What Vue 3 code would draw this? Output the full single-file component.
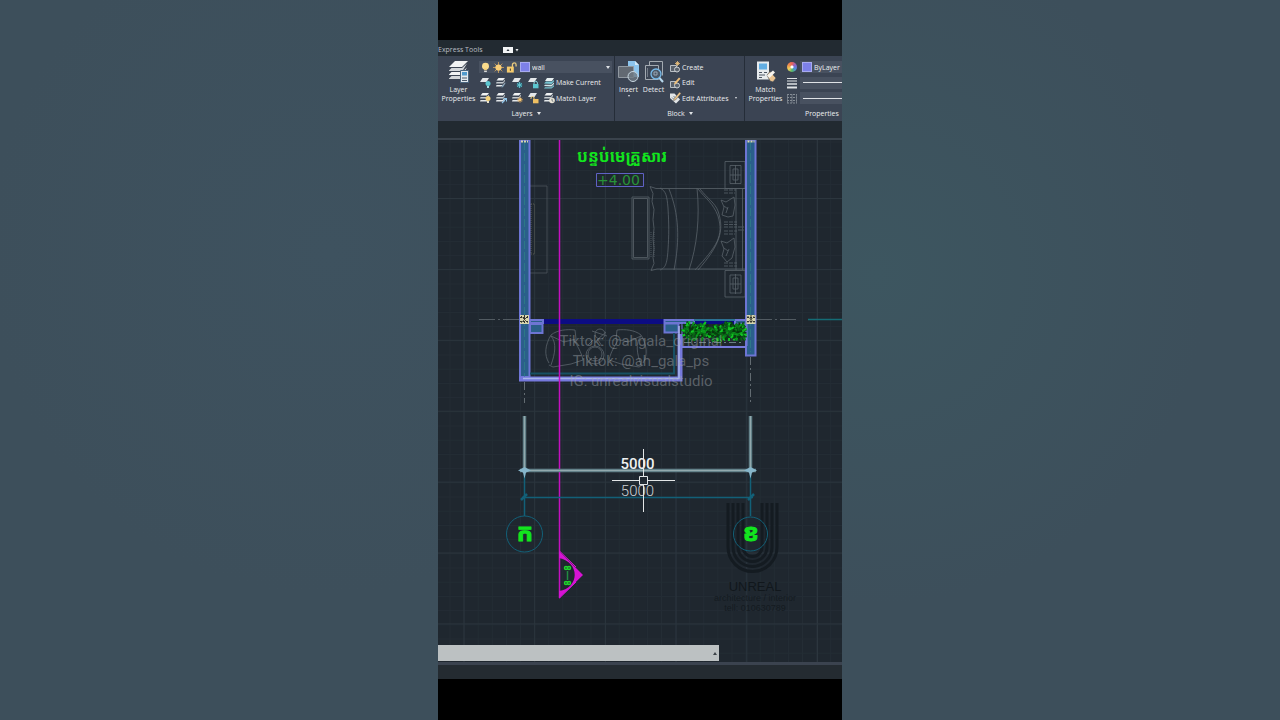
<script setup>
const plants = []
let seed = 7
const rnd = () => {
  seed = (seed * 16807) % 2147483647
  return seed / 2147483647
}
const greens = ['#07400e', '#0a6416', '#0a7a18', '#0c9a1c', '#12c824', '#06380d']
const clusters = [[690, 332], [701, 331], [717, 334], [729, 331], [739, 332]]
for (let i = 0; i < 420; i++) {
  const [cx, cy] = clusters[i % 5]
  const angle = rnd() * Math.PI * 2
  const radius = rnd() * 8
  const x = Math.min(744, Math.max(684, cx + Math.cos(angle) * radius))
  const y = cy + Math.sin(angle) * radius
  plants.push({
    d: `M${x.toFixed(1)} ${y.toFixed(1)}l${(Math.cos(angle) * 3).toFixed(1)} ${(Math.sin(angle) * 3).toFixed(1)}`,
    c: greens[Math.floor(rnd() * greens.length)]
  })
}

const range = (start, step, n) => Array.from({ length: n }, (_, i) => start + i * step)
const minorX = range(450, 14.1, 28)
const majorX = range(464, 70.7, 6)
const minorY = range(142, 14.2, 37)
const majorY = range(198.5, 70.9, 7)

const rowOne = [
  { id: 'off', label: 'Layer off' },
  { id: 'isolate', label: 'Isolate layer' },
  { id: 'freeze', label: 'Freeze layer' },
  { id: 'lock', label: 'Lock layer' }
]
const rowTwo = [
  { id: 'on', label: 'All layers on' },
  { id: 'unisolate', label: 'Unisolate layer' },
  { id: 'thaw', label: 'Thaw layers' },
  { id: 'unlock', label: 'Unlock layer' }
]
</script>

<template>
  <div class="page">
    <svg class="symbols" aria-hidden="true">
      <symbol id="sheet" viewBox="0 0 12 12"><path d="M3.5 1H10L7.5 5H1z" fill="#e4e7ea" /></symbol>
      <symbol id="stack" viewBox="0 0 12 12">
        <path d="M3.5 1H10L8 3.5H1.5z" fill="#f0f2f3" />
        <path d="M1.5 5H8l2-2.4V4L8 6.5H1z" fill="#c3c9ce" />
        <path d="M1.5 8H7.5l2.500-2.5V7L8 9.500H1z" fill="#e4e7ea" />
      </symbol>
      <symbol id="off" viewBox="0 0 12 12">
        <use href="#sheet" /><circle cx="9" cy="6.500" r="2.500" fill="#5cc6d0" /><path d="M8 9h2v2H8z" fill="#a8dfe3" />
      </symbol>
      <symbol id="isolate" viewBox="0 0 12 12">
        <use href="#stack" /><path d="M11.500 5 8 10l-1.500.7.300-1.700z" fill="#8fb9d4" stroke="#3b4453" stroke-width=".4" />
      </symbol>
      <symbol id="freeze" viewBox="0 0 12 12">
        <use href="#sheet" /><circle cx="8.500" cy="8" r="2.800" fill="#2c7584" />
        <path d="M8.500 5v6M6 6.500l5 3M11 6.500l-5 3" stroke="#6cc4d0" stroke-width=".9" />
      </symbol>
      <symbol id="lock" viewBox="0 0 12 12">
        <use href="#sheet" /><path d="M7 7.500V6a1.700 1.700 0 0 1 3.400 0v1.500" fill="none" stroke="#8bd2da" /><path d="M6 7h5.500v4.300H6z" fill="#5cc6d0" />
      </symbol>
      <symbol id="on" viewBox="0 0 12 12">
        <use href="#stack" /><circle cx="9" cy="6.500" r="2.500" fill="#f4d27a" /><path d="M8 9h2v2H8z" fill="#e9e2cc" />
      </symbol>
      <symbol id="unisolate" viewBox="0 0 12 12">
        <use href="#stack" /><path d="m7 11 4-4M8.500 6.500h3v3" fill="none" stroke="#8fc4e8" stroke-width="1.100" />
      </symbol>
      <symbol id="thaw" viewBox="0 0 12 12">
        <use href="#stack" /><path d="M9 4.800v6M6 7.800h6M7 5.800l4 4M11 5.800l-4 4" stroke="#e0a95c" stroke-width=".8" /><circle cx="9" cy="7.800" r="1.500" fill="#f7c873" />
      </symbol>
      <symbol id="unlock" viewBox="0 0 12 12">
        <use href="#sheet" /><path d="M7 7.500V6a1.500 1.500 0 0 0-3 0v1" fill="none" stroke="#e9c878" /><path d="M6 7h5.500v4.300H6z" fill="#eebf62" />
      </symbol>
      <symbol id="current" viewBox="0 0 12 12">
        <path d="M4 1h7L9 4H2z" fill="#e8f0f2" /><path d="M1 6.500 3 4.500h6l2-1.500v1.500L8.500 7z" fill="#77c2d0" />
        <path d="M1 9l1-1.200h6.500L11 5.500V7L8.500 9.500z" fill="#cfe6ea" /><path d="M1 11.500l1-1.200h6.500L11 8v1.500l-2.500 2z" fill="#77c2d0" />
      </symbol>
      <symbol id="match" viewBox="0 0 12 12">
        <use href="#stack" /><circle cx="9" cy="8.500" r="2.800" fill="#e9e5d8" /><path d="M9 6.800v1.900l1.300.8" fill="none" stroke="#525a66" stroke-width=".8" />
      </symbol>
      <symbol id="bulb" viewBox="0 0 12 12">
        <circle cx="6" cy="4.500" r="3.800" fill="#fbdc8c" /><path d="M4.500 7h3v2h-3z" fill="#f4cf78" /><path d="M4.500 9.500h3V11h-3z" fill="#d7d9da" />
      </symbol>
      <symbol id="sun" viewBox="0 0 12 12">
        <path d="M6 0v12M0 6h12M1.800 1.800l8.400 8.400M10.200 1.800l-8.400 8.400" stroke="#c39a5c" /><circle cx="6" cy="6" r="3.400" fill="#fbcf78" />
      </symbol>
      <symbol id="padlock" viewBox="0 0 12 12">
        <path d="M7 6V3a2 2 0 0 1 4 0v2" fill="none" stroke="#e8c97e" stroke-width="1.400" /><path d="M1 5h7.500v6.500H1z" fill="#f5cb6d" /><path d="M4.200 7h1.200v2.500H4.200z" fill="#4c4a40" />
      </symbol>
      <symbol id="create" viewBox="0 0 12 12">
        <path d="M1.500 4.500h6v6h-6z" fill="#59616c" stroke="#b9bfc5" /><circle cx="8" cy="8.500" r="2.500" fill="#59616c" stroke="#d0d4d7" />
        <path d="M8.500 0v5M6 2.500h5M6.800.8l3.400 3.400M10.200.8 6.800 4.200" stroke="#f2c57c" stroke-width=".8" />
      </symbol>
      <symbol id="edit" viewBox="0 0 12 12">
        <path d="M1.500 4.500h6v6h-6z" fill="#59616c" stroke="#b9bfc5" /><circle cx="8" cy="8.500" r="2.500" fill="#59616c" stroke="#d0d4d7" />
        <path d="M10 .5l1.500 1.300-4.500 5-2 .7.600-2z" fill="#edbd77" />
      </symbol>
      <symbol id="attributes" viewBox="0 0 12 12">
        <path d="M1 1.500h4.500L11 7.500l-4 4-6-5.500z" fill="#e3e6e8" /><path d="M3 5.500l2 2M4.500 4l2.500 2.500" stroke="#616975" stroke-width=".8" />
        <path d="M10.500 0 12 1.500 6.500 8l-2 .7.600-2z" fill="#efc486" stroke="#3b4453" stroke-width=".4" />
      </symbol>
    </svg>

    <div class="side left"></div>
    <main class="phone">
      <div class="app">
        <nav class="tabs">
          <a href="#express">Express Tools</a>
          <button class="featured" aria-label="Featured apps">
            <svg viewBox="0 0 16 6" width="16" height="6"><path d="M0 0h10v6H0z" fill="#f3f5f6" /><path d="M3.500 4 5 2l1.500 2z" fill="#28303a" /><path d="M12.500 2h3L14 4.500z" fill="#e6e8ea" /></svg>
          </button>
        </nav>

        <div class="ribbon">
          <section class="panel layers">
            <div class="body">
              <button class="big wide">
                <svg viewBox="0 0 24 24" width="24" height="24">
                  <path d="M8 1h13l-6 6H2z" fill="#f1f3f4" /><path d="M2 10.500 4.500 8H15l5-4.500L15.500 11H2z" fill="#d3d7db" />
                  <path d="M2 14.500 4.500 12H15l5-4.500L15.500 15H2z" fill="#f1f3f4" /><path d="M2 18.500 4.500 16H14l2-1v4H2z" fill="#d3d7db" />
                  <path d="M13.500 10.500h8v12h-8z" fill="#e2e9ee" stroke="#49657f" /><path d="M15 12h5v3.500h-5z" fill="#4f9acd" /><path d="M15 18h5M15 20.500h5" stroke="#4b5a6a" />
                </svg>
                <span>Layer<br>Properties</span>
              </button>
              <div class="tools">
                <div class="combo">
                  <svg width="11" height="11"><use href="#bulb" /></svg>
                  <svg width="11" height="11"><use href="#sun" /></svg>
                  <svg width="11" height="11"><use href="#padlock" /></svg>
                  <i class="swatch"></i>
                  <select aria-label="Layer"><option>wall</option></select>
                  <i class="caret"></i>
                </div>
                <div class="toolrow">
                  <button v-for="t in rowOne" :key="t.id" class="tool" :aria-label="t.label"><svg width="12" height="12"><use :href="'#' + t.id" /></svg></button>
                  <button class="text"><svg width="12" height="12"><use href="#current" /></svg>Make Current</button>
                </div>
                <div class="toolrow">
                  <button v-for="t in rowTwo" :key="t.id" class="tool" :aria-label="t.label"><svg width="12" height="12"><use :href="'#' + t.id" /></svg></button>
                  <button class="text"><svg width="12" height="12"><use href="#match" /></svg>Match Layer</button>
                </div>
              </div>
            </div>
            <button class="title">Layers <i class="caret"></i></button>
          </section>

          <section class="panel block">
            <div class="body">
              <button class="big">
                <svg viewBox="0 0 24 24" width="24" height="24">
                  <path d="M11 1h7l4 4v12H11z" fill="#8cc5ee" /><path d="M18 1v4h4" fill="#d3e9f8" /><path d="M1.500 6.500h15v11h-15z" fill="#626972" stroke="#9199a1" />
                  <circle cx="16" cy="16.500" r="5" fill="#707a84" fill-opacity=".8" stroke="#c8d7e1" />
                </svg>
                <span>Insert</span><i class="caret small"></i>
              </button>
              <button class="big">
                <svg viewBox="0 0 24 24" width="24" height="24">
                  <path d="M7.500 5V1.500h13v14M3.500 5.500h13v14h-13z" fill="none" stroke="#a3aab1" /><path d="M5.500 8v9" stroke="#737b86" />
                  <circle cx="14" cy="14" r="5" fill="#4a5868" stroke="#79bceb" stroke-width="1.300" /><path d="m17.500 18 3.500 4" stroke="#b8d9ee" stroke-width="2" /><path d="M12 12h3v3h-3z" fill="none" stroke="#9aa7b3" />
                </svg>
                <span>Detect</span>
              </button>
              <div class="list">
                <button class="text"><svg width="12" height="12"><use href="#create" /></svg>Create</button>
                <button class="text"><svg width="12" height="12"><use href="#edit" /></svg>Edit</button>
                <button class="text"><svg width="12" height="12"><use href="#attributes" /></svg>Edit Attributes<i class="caret small"></i></button>
              </div>
            </div>
            <button class="title">Block <i class="caret"></i></button>
          </section>

          <section class="panel properties">
            <div class="body">
              <button class="big wide">
                <svg viewBox="0 0 24 24" width="24" height="24">
                  <path d="M3 1.500h12v18H3z" fill="#e7ebee" /><path d="M5 3.500h8v6H5z" fill="#62aee3" /><path d="M5 12.500h3M5 15h6M5 17.500h3M10 12.500h3" stroke="#4b5462" />
                  <path d="m13 15 3-3.500 6 6.500-3 4-3-1z" fill="#e9c391" stroke="#3b4453" stroke-width=".6" /><path d="m13 15.500 6-5 2 2-5.500 5.500z" fill="#f6f3ed" />
                </svg>
                <span>Match<br>Properties</span>
              </button>
              <div class="list props">
                <div class="prop"><i class="wheel"></i><div class="combo"><i class="swatch"></i><select aria-label="Object color"><option>ByLayer</option></select></div></div>
                <div class="prop">
                  <svg viewBox="0 0 12 12" width="12" height="12"><path d="M1 1.500h10M1 4h10" stroke="#dfe2e5" /><path d="M1 7h10" stroke="#dfe2e5" stroke-width="1.500" /><path d="M1 10.500h10" stroke="#dfe2e5" stroke-width="2" /></svg>
                  <button class="linebox" aria-label="Lineweight"><i></i></button>
                </div>
                <div class="prop">
                  <svg viewBox="0 0 12 12" width="12" height="12"><path d="M1 2.500h10M1 5.500h10M1 8.500h10M1 11h10" stroke="#8f969e" stroke-dasharray="2 1" stroke-width=".9" /><path d="M1.500 2v9M6 2v9M10.500 2v9" stroke="#7f8791" stroke-width=".8" /></svg>
                  <button class="linebox" aria-label="Linetype"><i></i></button>
                </div>
              </div>
            </div>
            <button class="title">Properties <i class="caret"></i></button>
          </section>
        </div>

        <div class="strip"></div>

        <div class="workspace">
          <svg class="drawing" viewBox="438 140 404 522" preserveAspectRatio="xMidYMid slice" role="img" aria-label="Floor plan">
            <g stroke="#242d35" stroke-width="1">
              <path v-for="x in minorX" :key="'a' + x" :d="`M${x} 140V662`" />
              <path v-for="y in minorY" :key="'b' + y" :d="`M438 ${y}H842`" />
            </g>
            <g stroke="#2c363e" stroke-width="1">
              <path v-for="x in majorX" :key="'c' + x" :d="`M${x} 140V662`" />
              <path v-for="y in majorY" :key="'d' + y" :d="`M438 ${y}H842`" />
            </g>

            <path d="M728 503v44a24.500 24.500 0 0 0 49 0v-44M733 503v44a19.500 19.500 0 0 0 39 0v-44M738 503v44a14.500 14.500 0 0 0 29 0v-44M743 503v44a9.500 9.500 0 0 0 19 0v-44" fill="none" stroke="#141b21" stroke-width="3" />
            <g class="brand" text-anchor="middle">
              <text x="755" y="591" class="unreal">UNREAL</text>
              <text x="755" y="601" class="tag">architecture / interior</text>
              <text x="755" y="611" class="tag">tell: 010630789</text>
            </g>

            <g fill="none" stroke="#59626a" stroke-width=".8">
              <path d="M530 186h17v87h-17" stroke="#4c545c" />
              <path d="M531 204h3.500v50H531z" stroke-dasharray="1 1" stroke="#66645a" />
              <path d="M632 197h17v62h-17zM633.500 198.500h14v59h-14z" />
              <path d="M745 188.500H656l-6-2 3 7-1 8 2 8-1 10 1 9-1 10 1 10-1 9 1 6-3 7 6-1.500h88" />
              <path d="M651 232v26M654 232v26" stroke-dasharray="1 1" />
              <path d="M660 188c6 3 7 8 8 20 1 18 1 26 0 42-1 15-3 18-8 20M669 189c10 25 11 50 5 81M697 188c3 30 0 58-8 82" />
              <path d="M698 189c8 10 15 14 20 27 6 20-1 30-23 54M700 189c8 10 15 14 18 22 7 20 1 35-20 59" />
              <path d="M725 161.500h20v27h-20zM730 165.500h11v18h-11zM733 169h5v11h-5zM735.500 165v19M730 175h11" />
              <path d="M725 270.500h20v26.500h-20zM730 275h11v18h-11zM733 278h5v11h-5zM735.500 274v20M730 284h11" />
              <path d="M742.500 188v82M736 188v82" />
              <path d="m721 200 5 2 8-5 1 8-2 11-5 1-6-2 2-8zM724 206l4 3M726 213l2-6M721 241l6 2 7-5 1 9-3 11-5 4-5-6 2-7zM724 248l4 3M726 256l3-7" />
              <path d="M724 190h12M724 193h11M724 222h13M724 224.500h13M724 227h13M724 231h13M724 234h11M724 263h13M724 266h13M738 227h6M738 230h6" stroke-dasharray="4 1" />
            </g>

            <g fill="none" stroke="#555e65" stroke-width=".9">
              <path d="M549 363c-5-8-4-18 2-28 6-5 16-6 24-5l1 9-12 3-13-6M549 365l4 2 18-3 12-4c-2-9-6-14-9-20M551 336c6 7 4 18 0 29" />
              <path d="M643 363c5-8 4-18-2-28-6-5-16-6-24-5l-1 9 12 3 13-6M643 365l-4 2-18-3-12-4c2-9 6-14 9-20M641 336c-6 7-4 18 0 29" />
              <circle cx="595" cy="355" r="9" /><circle cx="595" cy="354" r="7" /><circle cx="600" cy="334" r="5" /><path d="m588 345 5-5M602 346l-4-6M592 331l15 5M597 340l9-8" />
            </g>

            <path d="M479 319.500h40M756 319.500h40" stroke="#525b62" stroke-dasharray="16 3 2 3" />
            <path d="M808 319.500h34" stroke="#146c76" stroke-width="1.500" />
            <path d="M524.500 382v21M750.500 357v46" stroke="#626b71" stroke-dasharray="8 3 2 3" />

            <path d="M543 321.500h124M694 321.500h42" stroke="#0c0c83" stroke-width="5" />
            <g fill="#2a5f8a" stroke="#6d75d4" stroke-width="2">
              <path d="M520 140h9.500v237H520z" /><path d="M746 140h9.500v215.500H746z" />
              <path d="M530 320h13v3h-13zM530 324h12.500v9H530zM664.500 323.500h14v9h-14zM664.500 320h29.500v3h-29.500z" />
              <path d="M735 320h11v4h-11z" />
            </g>
            <path d="M694 320h41" stroke="#2c7194" stroke-width="2" />
            <path d="M524.500 142v235M750.500 142v210" stroke="#2d7688" stroke-dasharray="8 3" />
            <path d="M530 373.500h144V333" fill="none" stroke="#175063" stroke-width="2" />
            <path d="M519 379h161V334" fill="none" stroke="#7578dc" stroke-width="5" />
            <path d="M523 378.500h156V326" fill="none" stroke="#a9b6ea" stroke-width="1.500" />
            <path d="M682 347h64" stroke="#777bdc" stroke-width="2" /><path d="M682 324v22M747 324v22" stroke="#777bdc" />
            <path v-for="(p, i) in plants" :key="'p' + i" :d="p.d" :stroke="p.c" stroke-width="2" />
            <path d="M684 342.500h60" stroke="#6a7d83" stroke-dasharray="7 3 2 3" />

            <path d="M520 315h9v9h-9zM746.500 315h9v9h-9z" fill="#d8d5ae" />
            <path d="m521 316 7 7M528 316l-7 7M524.500 315v9M747.500 316l7 7M754.500 316l-7 7M751 315v9M520 317.500h9M520 321.500h9M747 317.500h9M747 321.500h9" stroke="#32352d" stroke-dasharray="2 1" />
            <path d="M521 141.500h7M747.500 141.500h7" stroke="#d8d5ae" stroke-width="2" stroke-dasharray="2 1" />

            <g class="watermark" text-anchor="middle">
              <text x="641" y="346">Tiktok: @ahgala_original</text>
              <text x="641" y="366">Tiktok: @ah_gala_ps</text>
              <text x="641" y="386">IG: unrealvisualstudio</text>
            </g>

            <path d="M559.500 140V598" stroke="#c410c0" stroke-width="1.500" />

            <text x="622" y="162" class="khmer room" text-anchor="middle">បន្ទប់មេគ្រួសារ</text>
            <path d="M596.500 173.500h47v13h-47z" fill="none" stroke="#5f61c4" />
            <text x="597" y="185" class="level">+4.00</text>

            <g fill="none" stroke="#126078" stroke-width="1.500">
              <path d="M524.500 474v42M750.500 474v42M522 497.500h231" />
              <path d="m521 500 6-6M748 500l6-6" stroke-width="2.500" />
              <circle cx="524.500" cy="534" r="18" stroke-width="1" /><circle cx="750.500" cy="534" r="17" stroke-width="1" />
            </g>
            <path d="M524.500 416v56M750.500 416v56M520 470.500h236" stroke="#64828a" stroke-width="3.500" />
            <path d="M524.500 416v56M750.500 416v56M524 470.500h227" stroke="#92a9ad" />
            <path d="m518 470.500 6.500-3.500 6.500 3.500-5 2-1.500 6-1.500-6zM744 470.500l6.500-3.500 6.500 3.500-5 2-1.500 6-1.500-6z" fill="#86b5ca" />

            <text x="637.500" y="469" class="dim strong" text-anchor="middle">5000</text>
            <text x="637.500" y="496" class="dim" text-anchor="middle">5000</text>
            <path d="M612 480.500h27.500M647.500 480.500H675M643.500 449v27M643.500 485v27M639.500 476.500h8v8h-8z" fill="none" stroke="#e3e6e7" />

            <text x="525" y="541" class="khmer axis" text-anchor="middle">ក</text>
            <text x="751" y="541" class="khmer axis" text-anchor="middle">ខ</text>

            <path d="M559 551 583 575 559 598.500V591c21-3 21-29 0-33z" fill="#d613d4" />
            <path d="M559.500 551 576 567M559.500 598 576 582" stroke="#d613d4" />
            <g fill="none" stroke="#1ed52c" stroke-width="1.500"><circle cx="566" cy="568" r="1.500" /><circle cx="569" cy="568" r="1.500" /><circle cx="566" cy="583" r="1.500" /><circle cx="569" cy="583" r="1.500" /><path d="M567.500 571v9" stroke="#228c40" /></g>
          </svg>
          <div class="command">
            <input aria-label="Command line">
            <button aria-label="Command history"><i class="up"></i></button>
          </div>
        </div>
        <footer class="status"></footer>
      </div>
    </main>
    <div class="side right"></div>
  </div>
</template>

<style>
body { margin: 0; background: #3d4f5b; }
</style>

<style scoped>
.page {
  display: grid;
  grid-template-columns: 438fr 404fr 438fr;
  min-height: 100vh;
  font-family: "Open Sans", "Noto Sans", sans-serif;
  font-size: 7px;
  line-height: 9px;
  color: #eceef0;
}
.symbols { position: absolute; width: 0; height: 0; }
.side { background: #3d4f5b; }
.left { background: radial-gradient(circle at 75% 35%, #3e525f, #3d4f5b 60%); }
.right { background: radial-gradient(circle at 8% 38%, #3d5660, #3d4f5b 55%); }
.phone {
  display: flex;
  min-width: 0;
  padding: 40px 0 41px;
  background: #000;
}
.app { flex: 1; min-width: 0; display: flex; flex-direction: column; background: #222a31; }
button { border: 0; padding: 0; margin: 0; background: none; color: inherit; font: inherit; }
svg { display: block; flex: none; }
.tabs { display: flex; align-items: center; gap: 20px; height: 16px; padding-top: 3px; box-sizing: border-box; }
.tabs a { color: #b9bec3; text-decoration: none; }
.ribbon { display: flex; height: 65px; overflow: hidden; background: #3b4453; }
.panel {
  flex: none;
  box-sizing: border-box;
  display: flex;
  flex-direction: column;
  justify-content: space-between;
  border-right: 1px solid #252d38;
  padding: 4px 0 3px;
}
.layers { width: 177px; }
.block { width: 130px; padding-left: 1px; }
.properties { width: 180px; }
.body { display: flex; height: 46px; }
.big { display: flex; flex-direction: column; align-items: center; width: 25px; gap: 1px; text-align: center; white-space: nowrap; flex: none; }
.wide { width: 41px; }
.tools, .list { display: flex; flex-direction: column; justify-content: space-between; height: 43px; padding-top: 1px; }
.tools { flex: 1; padding-right: 2px; }
.list { padding-left: 3px; }
.combo { display: flex; align-items: center; gap: 2px; height: 12px; padding: 0 2px 0 1px; background: #485160; }
.swatch { width: 8px; height: 8px; margin-left: 1px; background: #7d80e8; border: 1px solid #a8abef; flex: none; }
select {
  flex: 1;
  min-width: 0;
  appearance: none;
  border: 0;
  padding: 0;
  font: inherit;
  color: inherit;
  background: none;
}
.toolrow { display: flex; align-items: center; }
.tool { width: 16px; display: flex; }
.text { display: flex; align-items: center; gap: 1px; white-space: nowrap; }
.title { align-self: center; display: flex; align-items: center; gap: 4px; }
.properties .title { align-self: flex-start; padding-left: 60px; }
.caret { border: 2px solid transparent; border-top: 3px solid #dfe2e6; border-bottom: 0; }
.small { border-width: 2px 1px 0; }
.text .caret { margin-left: 5px; }
.props { flex: 1; padding-left: 0; }
.prop { display: flex; align-items: center; gap: 2px; }
.prop .combo, .linebox { flex: 1; }
.linebox { display: flex; align-items: center; height: 12px; padding-left: 3px; background: #485160; }
.linebox i { flex: 1; height: 1px; background: #dfe2e6; }
.wheel {
  width: 10px;
  height: 10px;
  margin: 1px;
  border-radius: 50%;
  background: radial-gradient(#fff 0 1px, transparent 2px), conic-gradient(#e8625a, #8b63c9, #4d8fe0, #57b96a, #f0d05c, #ee8f4c, #e8625a);
}
.strip { height: 17px; background: #222a31; border-bottom: 2px solid #3a434c; }
.workspace { position: relative; flex: 1; min-height: 0; background: #1f272f; border-bottom: 3px solid #3b434f; }
.drawing { width: 100%; height: 100%; }
.khmer { font-family: "Noto Sans Khmer", "Khmer OS", "Open Sans", sans-serif; font-weight: 700; fill: #12e61e; stroke: #12e61e; }
.room { font-size: 16px; stroke-width: 0; }
.axis { font-size: 24px; stroke-width: 1px; }
.level { font: 400 14px "DejaVu Sans", sans-serif; fill: #279338; }
.dim { font: 300 15px Roboto, sans-serif; fill: #cdd1d3; }
.strong { font-weight: 500; fill: #eef1f2; }
.watermark { font: 400 15px Roboto, sans-serif; fill: #a3a9ae; fill-opacity: .45; }
.brand { font-family: "Liberation Sans", sans-serif; fill: #11171c; }
.unreal { font-size: 13px; }
.tag { font-size: 9px; fill-opacity: .8; }
.command {
  position: absolute;
  left: 0;
  bottom: 1px;
  width: 69.5%;
  height: 16px;
  display: flex;
  align-items: center;
  background: #bcc1c2;
}
.command input { flex: 1; min-width: 0; border: 0; padding: 0 4px; background: none; font: inherit; outline: 0; }
.command button { padding-right: 2px; }
.up { display: block; border: 2px solid transparent; border-top: 0; border-bottom: 3px solid #3c4247; }
.status { height: 14px; background: #242b31; }
</style>
